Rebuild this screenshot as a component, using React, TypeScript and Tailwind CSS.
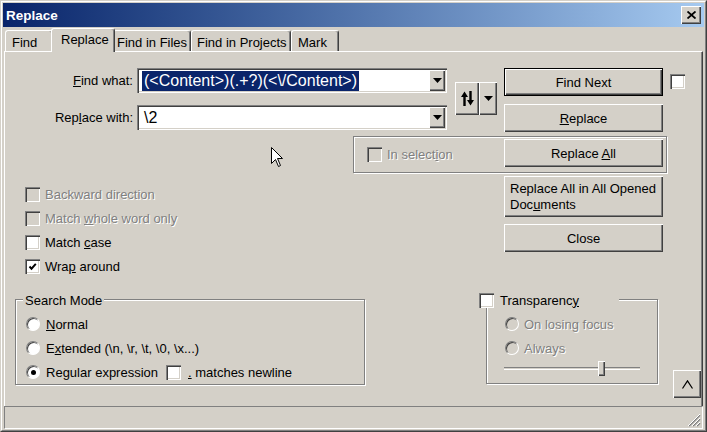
import type { ReactNode } from "react";

// Windows classic bevels
const raised =
  "shadow-[inset_1px_1px_0_#fff,inset_-1px_-1px_0_#404040,inset_-2px_-2px_0_#808080]";
const sunken =
  "shadow-[inset_1px_1px_0_#808080,inset_2px_2px_0_#404040,inset_-1px_-1px_0_#fff,inset_-2px_-2px_0_#d4d0c8]";
const etched = "border border-[#808080] shadow-[inset_1px_1px_0_#fff,1px_1px_0_#fff]";
const dim = "text-[#808080] [text-shadow:1px_1px_0_#fff]";

function Down() {
  return (
    <svg width="9" height="5" viewBox="0 0 9 5">
      <path d="M0 0h9L4.5 5z" fill="#000" />
    </svg>
  );
}

function Btn({
  children,
  className = "",
  isDefault = false,
}: {
  children: ReactNode;
  className?: string;
  isDefault?: boolean;
}) {
  return (
    <div
      className={`flex items-center justify-center bg-[#d4d0c8] ${raised} ${
        isDefault ? "border border-black" : ""
      } ${className}`}
    >
      {children}
    </div>
  );
}

function Box({
  checked = false,
  disabled = false,
  className = "",
}: {
  checked?: boolean;
  disabled?: boolean;
  className?: string;
}) {
  return (
    <span
      className={`flex h-[15px] w-[15px] shrink-0 items-center justify-center ${
        disabled ? "bg-[#d4d0c8]" : "bg-white"
      } ${sunken} ${className}`}
    >
      {checked && (
        <svg width="9" height="9" viewBox="0 0 9 9">
          <path d="M1.5 4.5l2 2.2L7.8 1.8" fill="none" stroke="#000" strokeWidth="1.9" />
        </svg>
      )}
    </span>
  );
}

function Radio({ checked = false, disabled = false }: { checked?: boolean; disabled?: boolean }) {
  return (
    <span
      className={`flex h-[14px] w-[14px] shrink-0 items-center justify-center rounded-full border border-t-[#808080] border-l-[#808080] border-r-white border-b-white shadow-[inset_1px_1px_0_#404040] ${
        disabled ? "bg-[#d4d0c8]" : "bg-white"
      }`}
    >
      {checked && <span className="h-[5px] w-[5px] rounded-full bg-black" />}
    </span>
  );
}

function Combo({ children }: { children: ReactNode }) {
  return (
    <div className={`flex h-[25px] w-[310px] items-stretch bg-white py-[2px] pr-[2px] pl-[5px] ${sunken}`}>
      <div className="flex flex-1 items-center font-['Liberation_Sans',Arial,sans-serif] text-[16px]">
        {children}
      </div>
      <div className={`flex w-[16px] items-center justify-center bg-[#d4d0c8] ${raised}`}>
        <Down />
      </div>
    </div>
  );
}

const tabs = [
  { label: "Find", cls: "w-[48px] pl-[6px]" },
  { label: "Replace", cls: "", active: true },
  { label: "Find in Files", cls: "w-[78px] pl-[3px]" },
  { label: "Find in Projects", cls: "w-[100px] pl-[5px]" },
  { label: "Mark", cls: "w-[48px] pl-[6px]" },
];

export default function App() {
  return (
    <div className="relative h-[432px] w-[707px] overflow-hidden border border-t-[#d4d0c8] border-l-[#d4d0c8] border-r-[#404040] border-b-[#404040] bg-[#d4d0c8] font-['Liberation_Sans',Arial,sans-serif] text-[13px] leading-[15px] text-black select-none">
      <div className="flex h-full flex-col border border-t-white border-l-white border-r-[#808080] border-b-[#808080] p-[1px]">
        {/* Title bar */}
        <div className="flex h-[24px] shrink-0 items-center bg-linear-to-r from-[#0a246a] to-[#a6caf0] px-[3px]">
          <span className="text-[13.5px] font-bold text-white">Replace</span>
          <div className={`ml-auto flex h-[18px] w-[20px] items-center justify-center bg-[#d4d0c8] ${raised}`}>
            <svg width="9" height="8" viewBox="0 0 9 8">
              <path d="M0.5 0.5L8.5 7.5M8.5 0.5L0.5 7.5" stroke="#000" strokeWidth="1.8" />
            </svg>
          </div>
        </div>

        {/* Tabs */}
        <div className="flex h-[24px] shrink-0 items-end pl-[2px]">
          {tabs.map((t) =>
            t.active ? (
              <div
                key={t.label}
                className="relative z-10 -mx-[2px] -mb-[1px] flex h-[24px] w-[64px] items-center rounded-t-[3px] border-t border-l border-t-white border-l-white border-r border-r-[#404040] bg-[#d4d0c8] pb-[2px] pl-[9px] shadow-[inset_-1px_0_0_#808080]"
              >
                {t.label}
              </div>
            ) : (
              <div
                key={t.label}
                className={`flex h-[21px] items-center rounded-t-[3px] border-t border-l border-t-white border-l-white border-r border-r-[#404040] pt-[2px] shadow-[inset_-1px_0_0_#808080] ${t.cls}`}
              >
                {t.label}
              </div>
            )
          )}
        </div>

        {/* Tab panel */}
        <div className="mx-[1px] flex min-h-0 flex-1 flex-col border-t border-l border-t-white border-l-white border-r border-r-[#404040] shadow-[inset_-1px_0_0_#808080]">
          {/* Find / replace fields */}
          <div className="flex items-start pt-[16px]">
            <div className="flex flex-col gap-[12px]">
              <div className="flex items-center">
                <span className="w-[132px] pr-[4px] text-right">
                  <u>F</u>ind what:
                </span>
                <Combo>
                  <span className="h-[20px] bg-[#0a246a] px-[2px] leading-[20px] text-white">
                    (&lt;Content&gt;)(.+?)(&lt;\/Content&gt;)
                  </span>
                </Combo>
              </div>
              <div className="flex items-center">
                <span className="w-[132px] pr-[4px] text-right">
                  Rep<u>l</u>ace with:
                </span>
                <Combo>
                  <span className="px-[2px]">\2</span>
                </Combo>
              </div>
            </div>

            <div className="mt-[14px] ml-[8px] flex h-[33px]">
              <div className={`flex w-[24px] items-center justify-center ${raised}`}>
                <svg width="13" height="15" viewBox="0 0 13 15">
                  <path d="M3.5 4v11M9.5 0v11" stroke="#000" strokeWidth="2.4" />
                  <path d="M0 6L3.5 0.5L7 6zM6 9L9.5 14.5L13 9z" fill="#000" />
                </svg>
              </div>
              <div className={`flex w-[18px] items-center justify-center ${raised}`}>
                <Down />
              </div>
            </div>

            <div className="ml-[7px] flex w-[159px] flex-col gap-[8px]">
              <Btn isDefault className="h-[28px]">
                Find Next
              </Btn>
              <Btn className="h-[28px]">
                <span>
                  <u>R</u>eplace
                </span>
              </Btn>
            </div>

            <Box className="mt-[6px] ml-[7px]" />
          </div>

          {/* In selection group */}
          <div className={`mt-[4px] ml-[348px] flex h-[37px] w-[314px] items-center pr-[3px] pl-[13px] ${etched}`}>
            <Box disabled />
            <span className={`ml-[5px] ${dim}`}>
              In select<u>i</u>on
            </span>
            <Btn className="mt-[2px] ml-auto h-[28px] w-[159px] self-start">
              <span>
                Replace <u>A</u>ll
              </span>
            </Btn>
          </div>

          {/* Options + remaining buttons */}
          <div className="mt-[3px] flex">
            <div className="mt-[6px] flex w-[499px] flex-col pl-[20px]">
              <label className="flex h-[24px] items-center gap-[5px]">
                <Box disabled />
                <span className={dim}>Backward direction</span>
              </label>
              <label className="flex h-[24px] items-center gap-[5px]">
                <Box disabled />
                <span className={dim}>
                  Match <u>w</u>hole word only
                </span>
              </label>
              <label className="flex h-[24px] items-center gap-[5px]">
                <Box />
                <span>
                  Match <u>c</u>ase
                </span>
              </label>
              <label className="flex h-[24px] items-center gap-[5px]">
                <Box checked />
                <span>
                  Wra<u>p</u> around
                </span>
              </label>
            </div>
            <div className="flex w-[159px] flex-col gap-[7px]">
              <Btn className="h-[41px] flex-col !items-start pl-[6px] leading-[16px] whitespace-nowrap">
                <span>Replace All in All Opened</span>
                <span>
                  Doc<u>u</u>ments
                </span>
              </Btn>
              <Btn className="h-[28px]">Close</Btn>
            </div>
          </div>

          {/* Search mode / transparency */}
          <div className="mt-[14px] flex items-start">
            <div className={`mt-[7px] ml-[10px] h-[86px] w-[350px] ${etched}`}>
              <div className="-mt-[7px] ml-[7px] h-[15px] w-fit bg-[#d4d0c8] px-[2px]">Search Mode</div>
              <div className="mt-[4px] flex flex-col pl-[10px]">
                <label className="flex h-[24px] items-center gap-[6px]">
                  <Radio />
                  <span>
                    <u>N</u>ormal
                  </span>
                </label>
                <label className="flex h-[24px] items-center gap-[6px]">
                  <Radio />
                  <span>
                    E<u>x</u>tended (\n, \r, \t, \0, \x...)
                  </span>
                </label>
                <div className="flex h-[24px] items-center">
                  <Radio checked />
                  <span className="ml-[6px] w-[120px]">
                    Re<u>g</u>ular expression
                  </span>
                  <Box />
                  <span className="ml-[7px]">
                    <u>.</u> matches newline
                  </span>
                </div>
              </div>
            </div>

            <div className={`mt-[7px] ml-[121px] h-[85px] w-[172px] ${etched}`}>
              <div className="-mt-[8px] -ml-[8px] flex h-[16px] w-[140px] items-center gap-[6px] bg-[#d4d0c8]">
                <Box />
                <span>
                  Transparenc<u>y</u>
                </span>
              </div>
              <div className="mt-[4px] flex flex-col pl-[18px]">
                <div className="flex h-[24px] items-center gap-[5px]">
                  <Radio disabled />
                  <span className={dim}>On losing focus</span>
                </div>
                <div className="flex h-[24px] items-center gap-[5px]">
                  <Radio disabled />
                  <span className={dim}>Always</span>
                </div>
              </div>
              <div className="ml-[17px] flex h-[16px] w-[136px] items-center">
                <div className="h-[3px] w-[94px] border-t border-b border-t-[#808080] border-b-white" />
                <div className={`h-[15px] w-[7px] bg-[#d4d0c8] ${raised}`} />
                <div className="h-[3px] flex-1 border-t border-b border-t-[#808080] border-b-white" />
              </div>
            </div>

            <Btn className="mt-[78px] ml-[15px] h-[28px] w-[28px]">
              <svg width="11" height="9" viewBox="0 0 11 9">
                <path d="M0.5 8.5L5.5 0.8L10.5 8.5" fill="none" stroke="#000" strokeWidth="1.2" />
              </svg>
            </Btn>
          </div>
        </div>

        {/* Status bar */}
        <div className="mx-[1px] flex h-[23px] shrink-0 items-end justify-end border-t border-l border-t-[#808080] border-l-[#808080] border-r border-b border-r-white border-b-white">
          <svg width="13" height="13" viewBox="0 0 13 13" className="mr-[1px] mb-[1px]">
            <path d="M12 1L1 12M12 5L5 12M12 9L9 12" stroke="#808080" strokeWidth="1.5" />
            <path d="M12 0L0 12M12 4L4 12M12 8L8 12" stroke="#fff" strokeWidth="1" />
          </svg>
        </div>
      </div>

      {/* Mouse pointer */}
      <svg
        width="13"
        height="21"
        viewBox="0 0 13 21"
        className="pointer-events-none absolute top-[146px] left-[270px]"
      >
        <path
          d="M0.5 0.5V16.5L4.5 12.5L7.5 19.5L9.5 18.5L6.5 11.5H11.5Z"
          fill="#fff"
          stroke="#000"
          strokeWidth="1"
          strokeLinejoin="miter"
        />
      </svg>
    </div>
  );
}
